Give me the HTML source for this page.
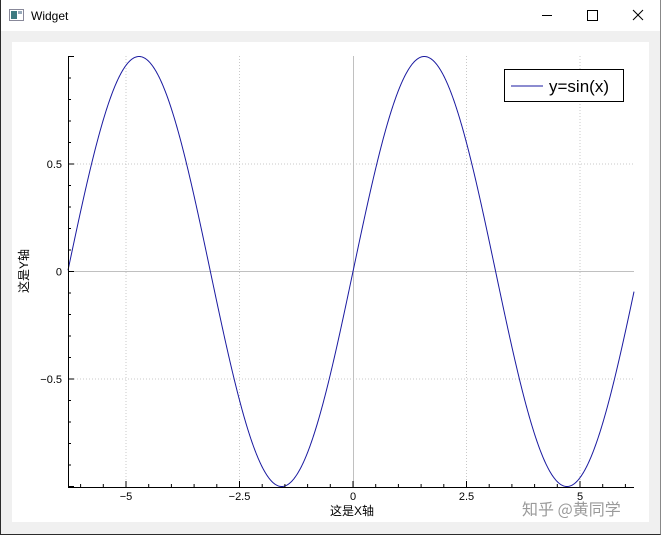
<!DOCTYPE html><html><head><meta charset="utf-8"><style>
body{margin:0;width:661px;height:535px;overflow:hidden;background:#f0f0f0;font-family:"Liberation Sans","Noto Sans CJK SC",sans-serif;position:relative}
.tb{position:absolute;left:0;top:0;width:661px;height:31px;background:#fff;border-left:1px solid #333;box-sizing:border-box}
.frame{position:absolute;left:0;top:0;width:661px;height:535px;border-left:1px solid #2b2b2b;border-bottom:1px solid #2b2b2b;border-right:1px solid #888;box-sizing:border-box;pointer-events:none}
.panel{position:absolute;left:12px;top:42px;width:637px;height:480px;background:#fff}
svg text{font-family:"Liberation Sans","Noto Sans CJK SC",sans-serif}
</style></head><body>
<div class="tb">
<svg width="661" height="31" style="position:absolute;left:0;top:0">
<rect x="8.5" y="9.5" width="14" height="11" fill="#fff" stroke="#889"/>
<rect x="10" y="11" width="6" height="8" fill="#3d7a80"/>
<rect x="17" y="11" width="4" height="3" fill="#9ab"/>
<text x="30" y="20" font-size="12" fill="#000">Widget</text>
<line x1="541" y1="15.5" x2="551" y2="15.5" stroke="#000"/>
<rect x="586.5" y="10.5" width="10" height="10" fill="none" stroke="#000"/>
<path d="M632 10L642 20M642 10L632 20" stroke="#000"/>
</svg></div>
<div class="panel"></div>
<svg id="p" width="661" height="535" style="position:absolute;left:0;top:0"></svg>
<div style="position:absolute;left:522px;top:496px;font-size:16px;color:#9a9a9a;font-family:'Noto Sans CJK SC',sans-serif">知乎 @黄同学</div>
<div class="frame"></div>
<script>
var s='',X0=353,SX=45.4,Y0=271.5,SY=215,L=68,R=634,T=56,B=487;
function x(v){return X0+v*SX}function y(v){return Y0-v*SY}
// grid
[-5,-2.5,2.5,5].forEach(v=>s+=`<line x1="${x(v)}" y1="${T}" x2="${x(v)}" y2="${B}" stroke="#c8c8c8" stroke-dasharray="1 2"/>`);
[0.5,-0.5].forEach(v=>s+=`<line x1="${L}" y1="${y(v)}" x2="${R}" y2="${y(v)}" stroke="#c8c8c8" stroke-dasharray="1 2"/>`);
s+=`<line x1="${X0}.5" y1="${T}" x2="${X0}.5" y2="${B}" stroke="#c0c0c0"/>`;
s+=`<line x1="${L}" y1="${Y0}" x2="${R}" y2="${Y0}" stroke="#c0c0c0"/>`;
// curve
var p=[];for(var px=L;px<=R;px+=0.5){var v=(px-X0)/SX;p.push(px+','+y(Math.sin(v)).toFixed(2))}
s+=`<polyline points="${p.join(' ')}" fill="none" stroke="#1a1aa0" stroke-width="1"/>`;
// axes
s+=`<line x1="${L}.5" y1="${T}" x2="${L}.5" y2="${B+1}" stroke="#000"/>`;
s+=`<line x1="${L}" y1="${B}.5" x2="${R}" y2="${B}.5" stroke="#000"/>`;
for(var v=-6;v<=6.2;v+=0.5){var big=Math.abs(v%2.5)<1e-6;s+=`<line x1="${x(v)}" y1="${B}" x2="${x(v)}" y2="${B-(big?6:3)}" stroke="#000"/>`}
for(var v=-1;v<=1.001;v+=0.1){var big=Math.abs(Math.round(v*10)%5)==0;s+=`<line x1="${L}" y1="${y(v)}" x2="${L+(big?6:3)}" y2="${y(v)}" stroke="#000"/>`}
[[-5,'−5'],[-2.5,'−2.5'],[0,'0'],[2.5,'2.5'],[5,'5']].forEach(a=>s+=`<text x="${x(a[0])}" y="500" font-size="11" text-anchor="middle">${a[1]}</text>`);
[[0.5,'0.5'],[0,'0'],[-0.5,'−0.5']].forEach(a=>s+=`<text x="62" y="${y(a[0])+4}" font-size="11" text-anchor="end">${a[1]}</text>`);
s+=`<text x="352" y="515" font-size="12" text-anchor="middle">这是X轴</text>`;
s+=`<text transform="translate(28,271) rotate(-90)" font-size="12" text-anchor="middle">这是Y轴</text>`;
s+=`<rect x="504.5" y="69.5" width="119" height="32" fill="#fff" stroke="#000"/>`;
s+=`<line x1="511" y1="86" x2="543" y2="86" stroke="#1a1aa0"/>`;
s+=`<text x="549" y="92" font-size="17">y=sin(x)</text>`;
document.getElementById('p').innerHTML=s;
</script>
</body></html>
